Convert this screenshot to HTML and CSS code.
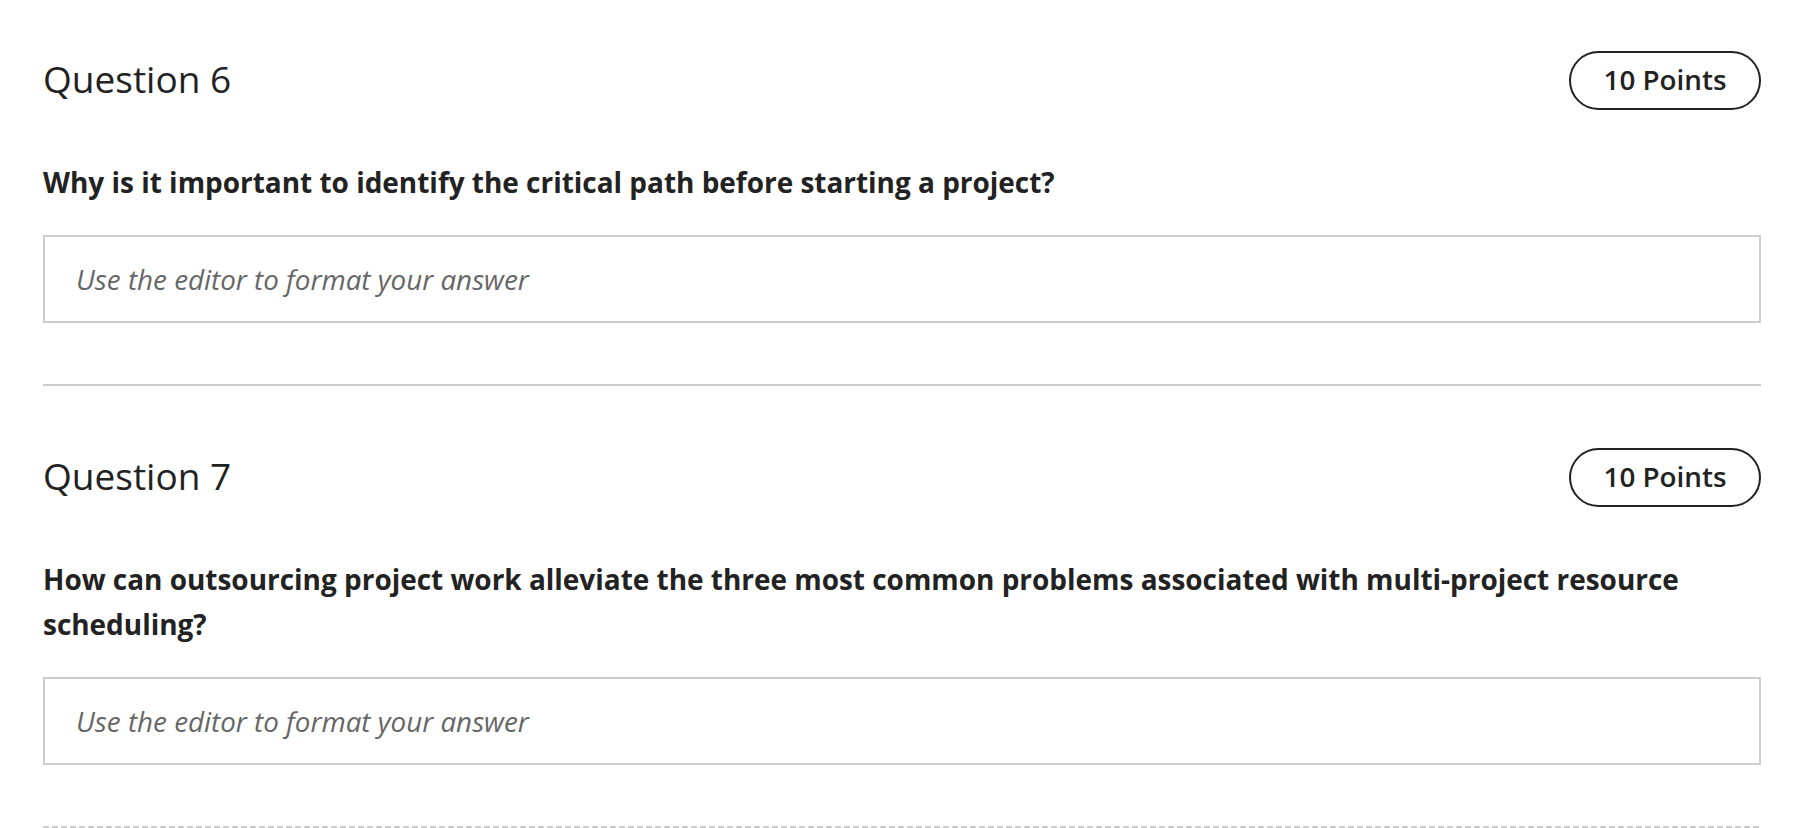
FILE: index.html
```html
<!DOCTYPE html>
<html lang="en">
<head>
<meta charset="utf-8">
<title>Questions</title>
<link rel="stylesheet" href="styles.css">
</head>
<body>
<main class="page">
  <section class="question">
    <header class="q-head">
      <h2 class="q-title">Question 6</h2>
      <span class="points">10 Points</span>
    </header>
    <p class="q-text">Why is it important to identify the critical path before starting a project?</p>
    <div class="answer">Use the editor to format your answer</div>
  </section>
  <section class="question">
    <header class="q-head">
      <h2 class="q-title">Question 7</h2>
      <span class="points">10 Points</span>
    </header>
    <p class="q-text">How can outsourcing project work alleviate the three most common problems associated with multi-project resource scheduling?</p>
    <div class="answer">Use the editor to format your answer</div>
  </section>
  <div class="dashed"></div>
</main>
</body>
</html>
```

FILE: styles.css
```css
* { box-sizing: border-box; }
html, body { margin: 0; padding: 0; background: #fff; }
body {
  font-family: "Open Sans", "Liberation Sans", sans-serif;
  color: #222;
}
.page {
  padding: 0 47px 0 43px;
}
.question {
  padding-top: 51px;
  padding-bottom: 61px;
  border-bottom: 2px solid #cccccc;
}
.question + .question {
  padding-top: 62px;
  border-bottom: none;
}
.q-head {
  display: flex;
  align-items: center;
  justify-content: space-between;
  height: 59px;
}
.q-title {
  margin: 0 0 4px;
  font-size: 37px;
  font-weight: 400;
  line-height: 1;
  color: #222;
}
.points {
  display: flex;
  align-items: center;
  justify-content: center;
  width: 192px;
  height: 59px;
  padding-bottom: 3px;
  border: 2px solid #222;
  border-radius: 30px;
  font-size: 27.8px;
  font-weight: 600;
  color: #222;
}
.q-text {
  margin: 50px 0 30px;
  font-size: 27.95px;
  font-weight: 700;
  line-height: 45px;
  color: #222;
}
.answer {
  height: 88px;
  border: 2px solid #cccccc;
  padding: 0 31px;
  display: flex;
  align-items: center;
  font-size: 27.8px;
  font-style: italic;
  color: #666;
}
.dashed {
  height: 2px;
  background-image: repeating-linear-gradient(to right, #cccccc 0 6px, transparent 6px 9px);
}
```
